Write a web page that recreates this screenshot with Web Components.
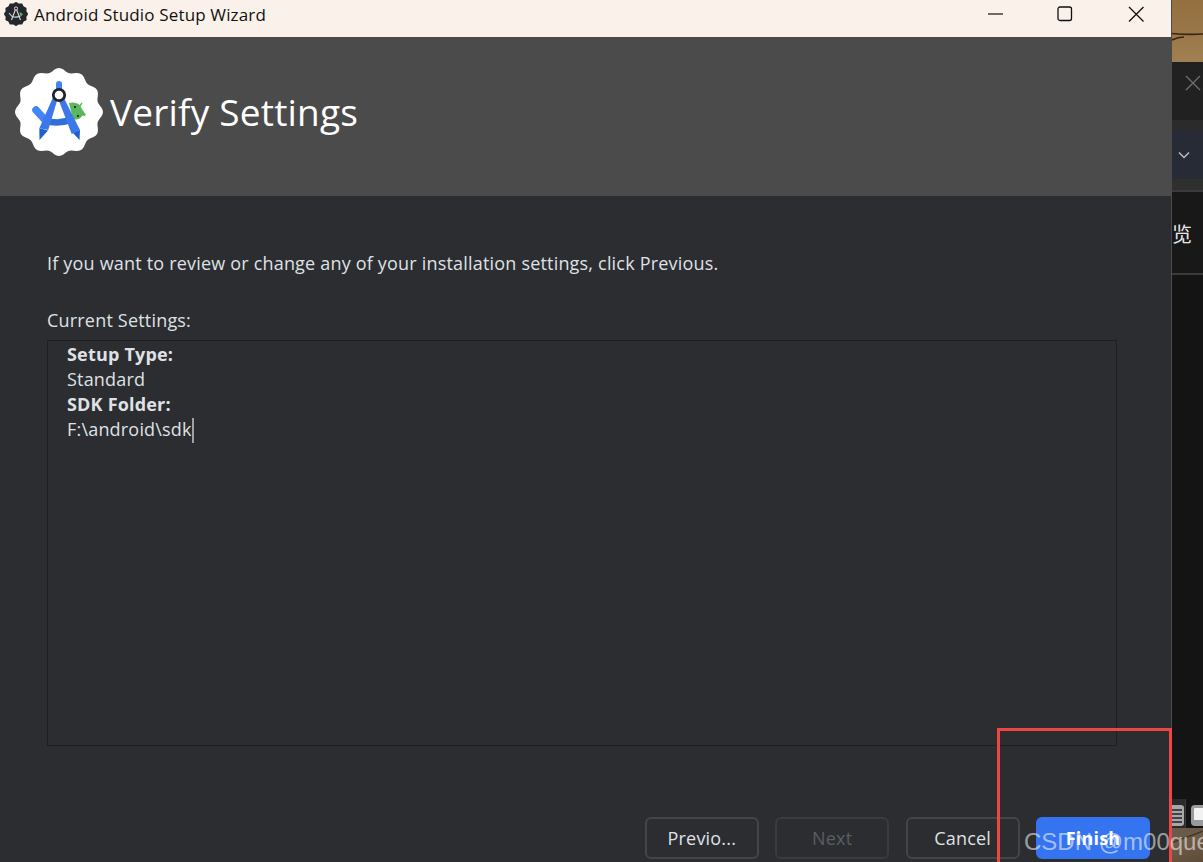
<!DOCTYPE html>
<html>
<head>
<meta charset="utf-8">
<title>Android Studio Setup Wizard</title>
<style>
  html, body { margin: 0; height: 100%; overflow: hidden; background: #1a1a1a; }
  body { font-family: "Open Sans", "Noto Sans", sans-serif; }
  .intro { margin: 0 0 33px; line-height: 24px; }
  settings-box i { display: inline-block; width: 2px; height: 25px; background: #a0a0a0; vertical-align: -7px; }
</style>
</head>
<body>
<desktop-shot>
  <setup-wizard heading="Verify Settings" wizard-title="Android Studio Setup Wizard">
    <p class="intro">If you want to review or change any of your installation settings, click Previous.</p>
    <settings-box label="Current Settings:">
      <b>Setup Type:</b>
      <span>Standard</span>
      <b>SDK Folder:</b>
      <span>F:\android\sdk<i></i></span>
    </settings-box>
    <wizard-btn slot="footer">Previo...</wizard-btn>
    <wizard-btn slot="footer" disabled>Next</wizard-btn>
    <wizard-btn slot="footer">Cancel</wizard-btn>
    <wizard-btn slot="footer" primary>Finish</wizard-btn>
  </setup-wizard>
  <shot-marks></shot-marks>
</desktop-shot>

<script>
// wavy round edge, for the banner badge and the titlebar icon
function scallop(base, wave) {
  let d = '';
  for (let i = 0; i < 360; i += 3) {
    const a = i * Math.PI / 180;
    const r = base + wave * Math.cos(12 * a);
    d += (i ? 'L' : 'M') + (r * Math.sin(a)).toFixed(2) + ' ' + (-r * Math.cos(a)).toFixed(2);
  }
  return d + 'Z';
}

// android studio compass, coordinates are from the centre of the badge
const LOGO_MARK = `
  <path d="M10 -9 Q20 -11 23 -3 L27 3 L23 4 Q20 9 14 7 Z" fill="#5cb85c"/>
  <path d="M20 -5 L23 -9 M22 1 L26 3.5" stroke="#5cb85c" stroke-width="1.4"/>
  <circle cx="16" cy="-5" r="1" fill="#111"/><circle cx="19" cy="4" r="1" fill="#111"/>
  <path d="M-23 -2 L-12.3 9.7" stroke="#4285f4" stroke-width="7.5" stroke-linecap="round" fill="none"/>
  <path d="M-14 5 Q0 10 11 4 L13 11 Q0 16 -16 12 Z" fill="#2f6fdc"/>
  <path d="M-3 -20 V-28 A3 3 0 0 1 3 -28 V-20 Z" fill="#4285f4"/>
  <path d="M-5.7 -15.3 L-2.3 -10.3 L-10.7 18 L-19.7 16.3 Z" fill="#3b78ea"/>
  <path d="M4.3 -15.3 L21 18 L12.7 22 L0.3 -10.3 Z" fill="#3b78ea"/>
  <path d="M-19.7 16.3 L-11 18.5 L-19.5 28 Z M21 18 L14 21 L20.5 28 Z" fill="#1f5fd0"/>
  <circle cx="0" cy="-17" r="5.7" fill="#fff" stroke="#22242a" stroke-width="2.8"/>
`;

class DesktopShot extends HTMLElement {
  constructor() {
    super();
    const shadow = this.attachShadow({ mode: 'open' });
    shadow.innerHTML = `
      <style>
        :host { display: flex; width: 1203px; height: 862px; overflow: hidden; position: relative; }
        .side { width: 32px; flex: none; display: flex; flex-direction: column; background: #141414; }
        .wood { height: 62px; flex: none; background: linear-gradient(180deg, #94703f, #9a784a 60%, #a08052); }
        .wood svg { display: block; }
        .tabbar { height: 58px; flex: none; box-sizing: border-box; background: #212121; display: flex; justify-content: flex-end; padding: 13px 2px 0 0; }
        .gap1 { height: 11px; flex: none; background: #2b2b2b; }
        .select { height: 48px; flex: none; background: #262b35; display: flex; align-items: center; justify-content: flex-end; padding-right: 13px; }
        .gap2 { height: 11px; flex: none; background: #2f2f2f; border-bottom: 2px solid #3a3a3a; }
        .tab { height: 81px; flex: none; background: #181818; border-bottom: 2px solid #3a3a3a; color: #e8e8e8; font: 20px "Noto Sans CJK SC", sans-serif; line-height: 83px; overflow: hidden; white-space: nowrap; direction: rtl; padding-right: 11px; }
        .rest { flex: 1; background: #141414; }
        .foot { height: 29px; flex: none; display: flex; background: #141414; }
        .list { width: 15px; height: 29px; box-sizing: border-box; background: #2a2a2a; border-right: 1px solid #3a3a3a; padding-top: 6px; }
        .list svg { display: block; }
        .screen { margin: 6px 0 0 5px; width: 12px; height: 21px; box-sizing: border-box; background: #f2f2f2; border: 3px solid #9a9a9a; border-right: 0; border-bottom-width: 6px; border-radius: 4px 0 0 4px; }
        .desk { height: 34px; flex: none; background: linear-gradient(160deg, #6a5a4a 30%, #3a3026 32%, #6f5c48 36%, #5e4c3a); }
      </style>
      <slot></slot>
      <div class="side">
        <div class="wood">
          <svg width="32" height="62" viewBox="0 0 32 62"><path d="M1 33.5 Q16 35 32 34 M1 40 Q7 37 13 37" stroke="#3a2410" stroke-width="1.6" fill="none"/></svg>
        </div>
        <div class="tabbar">
          <svg width="16" height="16" viewBox="0 0 16 16"><path d="M1 1 L15 15 M15 1 L1 15" stroke="#6d6d6d" stroke-width="1.4"/></svg>
        </div>
        <div class="gap1"></div>
        <div class="select">
          <svg width="12" height="8" viewBox="0 0 12 8"><path d="M1 1.5 L6 6.5 L11 1.5" stroke="#b8bcc4" stroke-width="1.5" fill="none"/></svg>
        </div>
        <div class="gap2"></div>
        <div class="tab">览</div>
        <div class="rest"></div>
        <div class="foot">
          <div class="list">
            <svg width="13" height="21" viewBox="0 0 13 21"><path d="M0 0 H10 A3 3 0 0 1 13 3 V18 A3 3 0 0 1 10 21 H0 Z" fill="#a8a8a8"/><path d="M0 5 H11 M0 9 H11 M0 13 H11 M0 17 H11" stroke="#222" stroke-width="1.4"/></svg>
          </div>
          <div class="screen"></div>
        </div>
        <div class="desk"></div>
      </div>
    `;
  }
}

class SetupWizard extends HTMLElement {
  constructor() {
    super();
    const shadow = this.attachShadow({ mode: 'open' });
    shadow.innerHTML = `
      <style>
        :host { display: flex; flex-direction: column; width: 1171px; height: 862px; flex: none; background: #2b2d30; box-shadow: 1px 0 #4a4a4a; position: relative; }
        .titlebar { height: 37px; flex: none; box-sizing: border-box; padding-bottom: 9px; background: #f9f1ea; display: flex; align-items: center; color: #111; font-size: 17px; letter-spacing: 0.15px; }
        .app-icon { width: 24px; height: 24px; margin: 0 6px 0 4px; }
        .title { flex: 1; }
        .ctl { width: 71px; height: 28px; display: flex; align-items: center; justify-content: center; }
        .ctl .min { margin-left: 4px; }
        .banner { height: 159px; flex: none; box-sizing: border-box; background: #4b4b4b; display: flex; align-items: center; padding: 0 0 9px 15px; color: #fff; font-size: 37px; letter-spacing: 0.2px; }
        .banner span { margin-top: -2px; }
        .badge { width: 88px; height: 88px; margin-right: 7px; }
        .body { flex: 1; padding: 55px 54px 0 47px; color: #dfe1e5; font-size: 18px; letter-spacing: 0.19px; display: flex; flex-direction: column; min-height: 0; }
        .footer { display: flex; justify-content: flex-end; gap: 16.4px; padding: 0 21px 3px 0; }
      </style>
      <div class="titlebar">
        <svg class="app-icon" viewBox="-12 -12 24 24">
          <path fill="#24272c" d="${scallop(11.4, 0.6)}"/>
          <path d="M0 -6 L-4.5 6 M0 -6 L4.5 6 M-7 -1 L-3.5 3 M-3.5 2.5 Q0 4 4 2" stroke="#d9d9d9" stroke-width="1.1" fill="none"/>
          <circle cx="0" cy="-5.5" r="1.6" fill="#24272c" stroke="#d9d9d9" stroke-width="1"/>
          <path d="M3.5 -2 L7 0 L4.5 3 Z" fill="#58b560"/>
        </svg>
        <div class="title">${this.getAttribute('wizard-title')}</div>
        <div class="ctl"><svg class="min" width="16" height="2" viewBox="0 0 16 2"><path d="M0 1 H15" stroke="#111" stroke-width="1.2"/></svg></div>
        <div class="ctl"><svg width="16" height="16" viewBox="0 0 16 16"><rect x="1" y="1" width="13.5" height="13.5" rx="2" fill="none" stroke="#111" stroke-width="1.3"/></svg></div>
        <div class="ctl"><svg width="16" height="16" viewBox="0 0 16 16"><path d="M1 1 L15.5 15.5 M15.5 1 L1 15.5" stroke="#111" stroke-width="1.3"/></svg></div>
      </div>
      <div class="banner">
        <svg class="badge" viewBox="-44 -44 88 88">
          <path fill="#fff" d="${scallop(42, 2)}"/>
          ${LOGO_MARK}
        </svg>
        <span>${this.getAttribute('heading')}</span>
      </div>
      <div class="body"><slot></slot></div>
      <div class="footer"><slot name="footer"></slot></div>
    `;
  }
}

class SettingsBox extends HTMLElement {
  constructor() {
    super();
    const shadow = this.attachShadow({ mode: 'open' });
    shadow.innerHTML = `
      <style>
        :host { display: block; }
        .label { line-height: 24px; margin-bottom: 8px; }
        .box { height: 402px; border: 1px solid #1e1f22; padding: 1px 19px 1px; line-height: 25px; }
        ::slotted(b), ::slotted(span) { display: block; }
        ::slotted(b) { font-weight: 700; }
      </style>
      <div class="label">${this.getAttribute('label')}</div>
      <div class="box"><slot></slot></div>
    `;
  }
}

class WizardBtn extends HTMLElement {
  constructor() {
    super();
    const shadow = this.attachShadow({ mode: 'open' });
    shadow.innerHTML = `
      <style>
        :host { display: flex; align-items: center; justify-content: center; width: 114px; height: 42px; box-sizing: border-box; border: 2px solid #43454a; border-radius: 6px; color: #dfe1e5; font-size: 18px; letter-spacing: 0.19px; }
        :host([disabled]) { color: #5a5d63; border-color: #393b40; }
        :host([primary]) { background: #3574f0; border-color: #3574f0; color: #fff; font-weight: 700; }
      </style>
      <slot></slot>
    `;
  }
}

// overlays: the screenshot's red annotation and the site watermark
class ShotMarks extends HTMLElement {
  constructor() {
    super();
    const shadow = this.attachShadow({ mode: 'open' });
    shadow.innerHTML = `
      <style>
        :host { display: block; }
        .frame { position: absolute; z-index: 5; left: 997px; top: 728px; width: 175px; height: 140px; box-sizing: border-box; border: 3px solid #f04545; }
        .mark { position: absolute; z-index: 6; left: 1024px; top: 828px; font: 24px "Liberation Sans", sans-serif; color: rgba(255,255,255,0.55); white-space: nowrap; }
      </style>
      <div class="frame"></div>
      <div class="mark">CSDN @m00que</div>
    `;
  }
}

customElements.define('desktop-shot', DesktopShot);
customElements.define('setup-wizard', SetupWizard);
customElements.define('settings-box', SettingsBox);
customElements.define('wizard-btn', WizardBtn);
customElements.define('shot-marks', ShotMarks);
</script>
</body>
</html>
